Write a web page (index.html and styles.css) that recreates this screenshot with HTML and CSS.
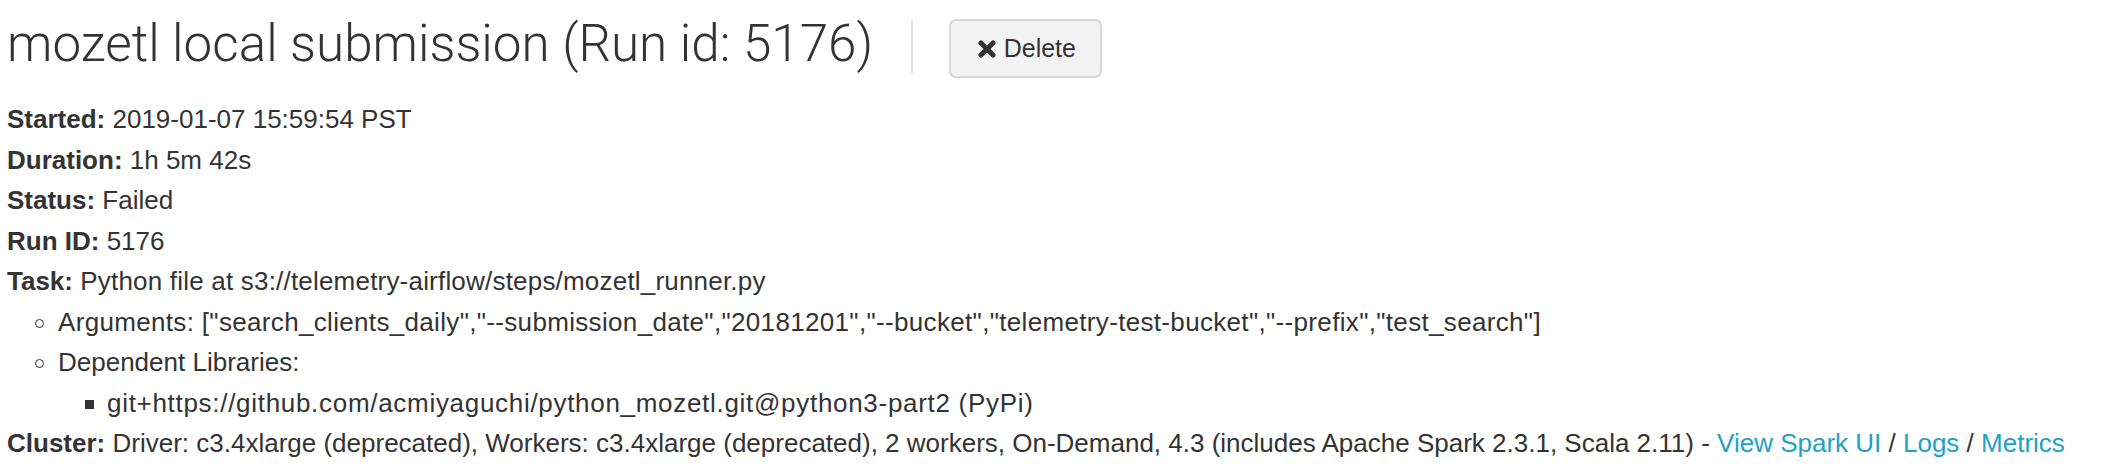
FILE: index.html
```html
<!DOCTYPE html>
<html>
<head>
<meta charset="utf-8">
<link rel="stylesheet" href="styles.css">
</head>
<body>
<div class="page">
  <div class="header">
    <h1 class="title">mozetl local submission (Run id: 5176)</h1>
    <div class="divider"></div>
    <button class="btn"><svg class="x-icon" viewBox="0 0 18 18"><path d="M3 3 L15 15 M15 3 L3 15" stroke="#333" stroke-width="5" stroke-linecap="round"/></svg><span>Delete</span></button>
  </div>
  <div class="details">
    <div class="row"><b>Started:</b> 2019-01-07 15:59:54 PST</div>
    <div class="row"><b>Duration:</b> 1h 5m 42s</div>
    <div class="row"><b>Status:</b> Failed</div>
    <div class="row"><b>Run ID:</b> 5176</div>
    <div class="row"><b>Task:</b> <span class="task">Python file at s3://telemetry-airflow/steps/mozetl_runner.py</span></div>
    <ul class="list lvl1">
      <li><span class="args">Arguments: ["search_clients_daily","--submission_date","20181201","--bucket","telemetry-test-bucket","--prefix","test_search"]</span></li>
      <li>Dependent Libraries:</li>
    </ul>
    <ul class="list lvl2">
      <li><span class="lib">git+https://github.com/acmiyaguchi/python_mozetl.git@python3-part2 (PyPi)</span></li>
    </ul>
    <div class="row"><b>Cluster:</b> Driver: c3.4xlarge (deprecated), Workers: c3.4xlarge (deprecated), 2 workers, On-Demand, 4.3 (includes Apache Spark 2.3.1, Scala 2.11) - <a href="#">View Spark UI</a> / <a href="#">Logs</a> / <a href="#">Metrics</a></div>
  </div>
</div>
</body>
</html>
```

FILE: styles.css
```css
html, body {
  margin: 0;
  padding: 0;
  background: #ffffff;
}
body {
  font-family: "Liberation Sans", Arial, sans-serif;
  color: #333333;
}
.page {
  padding-left: 7px;
}
.header {
  display: flex;
  align-items: flex-start;
  height: 99px;
}
.title {
  margin: 18px 0 0 0;
  font-family: Roboto, "Liberation Sans", sans-serif;
  font-weight: 300;
  font-size: 51.2px;
  line-height: 52px;
  color: #333333;
  white-space: nowrap;
}
.divider {
  width: 2px;
  height: 53px;
  margin: 20px 0 0 37.5px;
  background: #e2e2e2;
}
.btn {
  display: flex;
  align-items: center;
  gap: 8px;
  box-sizing: border-box;
  width: 153px;
  height: 59px;
  margin: 19px 0 0 36px;
  padding: 0 0 0 27px;
  background: #f3f3f3;
  border: 2px solid #d6d6d6;
  border-radius: 7px;
  font-family: "Liberation Sans", Arial, sans-serif;
  font-size: 25px;
  color: #333333;
}
.x-icon {
  width: 18px;
  height: 18px;
}
.details {
  font-size: 26px;
  line-height: 40.5px;
}
.row b {
  font-weight: bold;
}
.task {
  letter-spacing: 0.2px;
}
.list {
  margin: 0;
  padding: 0;
  list-style: none;
}
.list li {
  white-space: nowrap;
}
.args {
  letter-spacing: 0.33px;
}
.lib {
  letter-spacing: 0.7px;
}
.lvl1 li {
  padding-left: 28px;
}
.lvl1 li::before {
  content: "";
  display: inline-block;
  box-sizing: border-box;
  width: 9px;
  height: 9px;
  border: 1.5px solid #333333;
  border-radius: 50%;
  margin-right: 14px;
  vertical-align: 3px;
}
.lvl2 li {
  padding-left: 78px;
}
.lvl2 li::before {
  content: "";
  display: inline-block;
  width: 9px;
  height: 9px;
  background: #333333;
  margin-right: 13px;
  vertical-align: 3px;
}
a {
  color: #1ea2c9;
  text-decoration: none;
}
```
